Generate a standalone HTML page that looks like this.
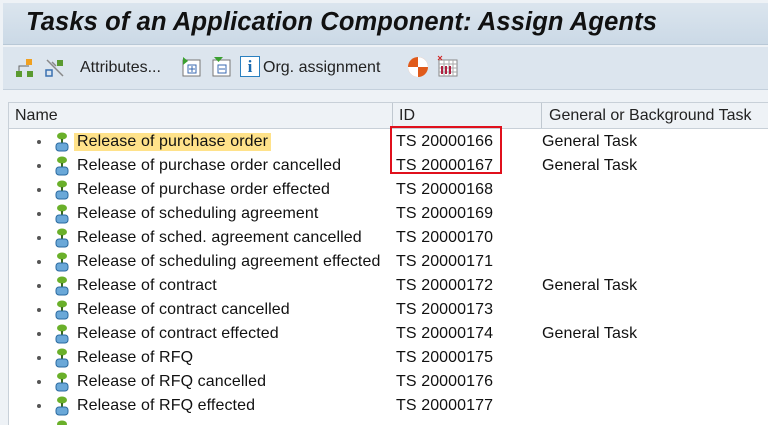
<!DOCTYPE html>
<html><head><style>
html,body{margin:0;width:768px;height:425px;overflow:hidden}
body{background:#eef2f6;font-family:"Liberation Sans",sans-serif;position:relative}
.title{position:absolute;left:3px;top:3px;width:765px;height:41px;background:linear-gradient(#dbe5ee,#cbd9e6);border-bottom:1px solid #b8c8d6}
.title span{position:absolute;left:23px;top:5px;font-size:25.5px;letter-spacing:0.12px;font-weight:bold;font-style:italic;color:#111}
.tb{position:absolute;left:3px;top:47px;width:765px;height:42px;background:#dce5ee;border-bottom:1px solid #c4d0dc}
.tb .t{position:absolute;top:12px;font-size:16px;color:#222}
.tbl{position:absolute;left:8px;top:102px;width:760px;height:323px;background:#fff;border-left:1px solid #c8d0d8}
.hdr{position:absolute;left:0;top:0;width:760px;height:25px;background:#eef2f6;border-top:1px solid #c8d0d8;border-bottom:1px solid #c8d0d8}
.hdr div{position:absolute;top:4px;font-size:16px;color:#222}
.sep{position:absolute;top:0;width:1px;height:25px;background:#c0c8d0}
.row{position:absolute;left:0;height:24px;width:760px;font-size:16px;color:#111;letter-spacing:0.1px}
.row span{position:absolute;top:3px}
.dot{position:absolute;left:29px;top:10px;width:4px;height:4px;background:#555;border-radius:2px}
.ic{position:absolute;left:46px;top:2px}
.hl{background:#ffe28a;padding:0 3px;margin-left:-3px}
.red{position:absolute;left:390px;top:126px;width:112px;height:48px;border:2px solid #e0101c;box-sizing:border-box}
</style></head><body>
<div class="title"><span>Tasks of an Application Component: Assign Agents</span></div>
<div class="tb">
<svg style="position:absolute;left:11px;top:10px" width="22" height="22"><rect x="12" y="2" width="6" height="6" fill="#f0a020"/><rect x="2" y="14" width="6" height="6" fill="#5a9a30"/><rect x="13" y="14" width="6" height="6" fill="#5a9a30"/><path d="M5 14V9h10" stroke="#666" fill="none"/></svg>
<svg style="position:absolute;left:41px;top:10px" width="22" height="22"><rect x="2" y="13" width="6" height="6" fill="none" stroke="#3a70b0" stroke-width="1.5"/><rect x="13" y="3" width="6" height="6" fill="#5a9a30"/><path d="M3 3L19 19M8 5l4 4" stroke="#888" stroke-width="1.5"/></svg>
<span class="t" style="left:77px">Attributes...</span>
<svg style="position:absolute;left:177px;top:9px" width="22" height="22"><rect x="3" y="4" width="17" height="16" fill="#fff" stroke="#777"/><path d="M3 1v8l5-4z" fill="#3aa030"/><rect x="8" y="9" width="8" height="8" fill="none" stroke="#3a6ab0"/><path d="M12 10v6M9 13h6" stroke="#3a6ab0"/></svg>
<svg style="position:absolute;left:207px;top:9px" width="22" height="22"><rect x="3" y="4" width="17" height="16" fill="#fff" stroke="#777"/><path d="M4 1h9l-4.5 5z" fill="#3aa030"/><rect x="8" y="9" width="8" height="8" fill="none" stroke="#3a6ab0"/><path d="M9 13h6" stroke="#3a6ab0"/></svg>
<div style="position:absolute;left:237px;top:9px;width:18px;height:19px;border:1px solid #2a80c0;background:#fff;color:#1a6ab0;font:bold 17px 'Liberation Serif',serif;text-align:center;line-height:19px">i</div>
<span class="t" style="left:260px">Org. assignment</span>
<svg style="position:absolute;left:404px;top:9px" width="22" height="22"><circle cx="11" cy="11" r="10" fill="#e05a1a"/><path d="M11 1A10 10 0 0 1 21 11H11zM11 21A10 10 0 0 1 1 11H11z" fill="#fff"/></svg>
<svg style="position:absolute;left:433px;top:8px" width="24" height="24"><rect x="3" y="5" width="18" height="16" fill="#fff" stroke="#888"/><path d="M3 9h18M3 13h18M3 17h18M8 5v16M13 5v16M17 5v16" stroke="#aaa"/><path d="M2 1l4 4M6 1L2 5" stroke="#d02020"/><path d="M6 11v8M10 11v8M14 11v8" stroke="#b02040" stroke-width="2"/></svg>
</div>
<div class="tbl">
<div class="hdr"><div style="left:6px">Name</div><div class="sep" style="left:383px;top:0"></div><div style="left:390px">ID</div><div class="sep" style="left:532px;top:0"></div><div style="left:540px">General or Background Task</div></div>
</div>
<div id="rows" style="position:absolute;left:8px;top:130px;width:760px;height:295px;overflow:hidden"></div>
<div class="red"></div>
<script>
var d=[["Release of purchase order","TS 20000166","General Task"],["Release of purchase order cancelled","TS 20000167","General Task"],["Release of purchase order effected","TS 20000168",""],["Release of scheduling agreement","TS 20000169",""],["Release of sched. agreement cancelled","TS 20000170",""],["Release of scheduling agreement effected","TS 20000171",""],["Release of contract","TS 20000172","General Task"],["Release of contract cancelled","TS 20000173",""],["Release of contract effected","TS 20000174","General Task"],["Release of RFQ","TS 20000175",""],["Release of RFQ cancelled","TS 20000176",""],["Release of RFQ effected","TS 20000177",""],["","",""]];
var ic='<svg class="ic" width="16" height="22"><ellipse cx="8" cy="4" rx="5" ry="3.5" fill="#6ab02a"/><path d="M8 7v4" stroke="#3a6a20" stroke-width="2"/><rect x="2" y="11" width="12" height="8" rx="3" fill="#6aa8d8" stroke="#2a6aa0"/></svg>';
var h='';d.forEach(function(r,i){h+='<div class="row" style="top:'+(i*24)+'px"><div class="dot"></div>'+ic+'<span style="left:69px"'+(i==0?' class="hl"':'')+'>'+r[0]+'</span><span style="left:388px">'+r[1]+'</span><span style="left:534px">'+r[2]+'</span></div>';});
document.getElementById('rows').innerHTML=h;
</script>
</body></html>
